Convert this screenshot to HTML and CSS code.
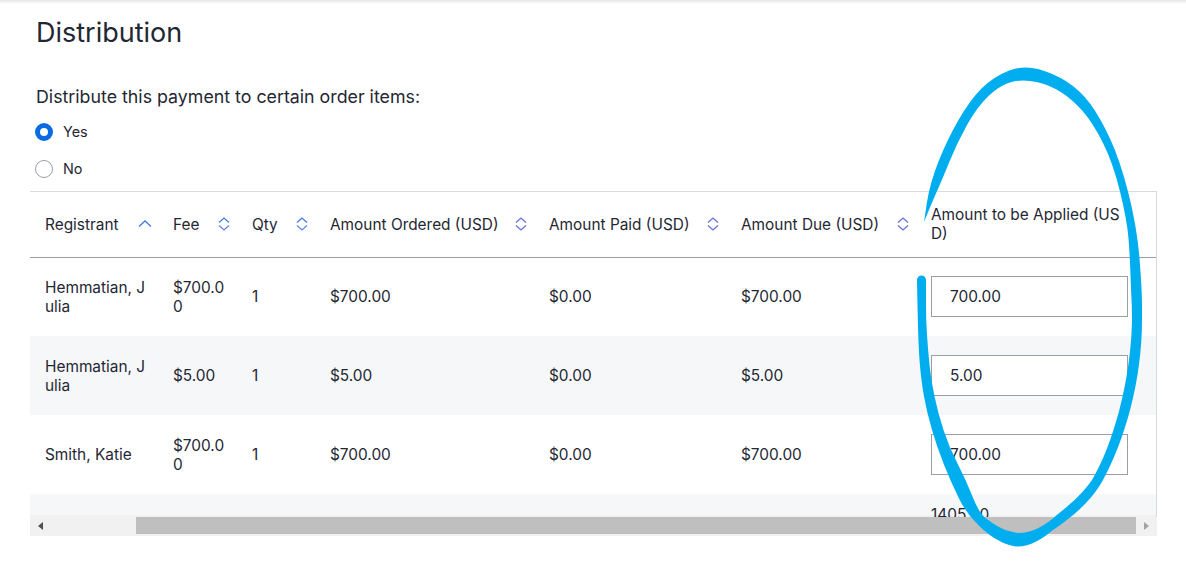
FILE: index.html
```html
<!DOCTYPE html>
<html lang="en">
<head>
<meta charset="utf-8">
<title>Distribution</title>
<link rel="stylesheet" href="styles.css">
</head>
<body>
<div class="topshadow"></div>
<main class="page">
  <h2 class="title">Distribution</h2>
  <p class="question">Distribute this payment to certain order items:</p>
  <label class="radio"><input type="radio" name="dist" checked><span>Yes</span></label>
  <label class="radio"><input type="radio" name="dist"><span>No</span></label>
  <div class="tablewrap">
    <div class="clip">
      <table class="grid">
        <colgroup>
          <col class="c1"><col class="c2"><col class="c3"><col class="c4"><col class="c5"><col class="c6"><col class="c7">
        </colgroup>
        <thead>
          <tr>
            <th><div class="head"><span class="hl">Registrant</span><svg class="sort" viewBox="0 0 14 14"><path class="up" d="M1 9.5 7 4l6 5.5"/></svg></div></th>
            <th><div class="head"><span class="hl">Fee</span><svg class="sort" viewBox="0 0 14 14"><path class="up" d="M2 5.5 7 1l5 4.5"/><path class="down" d="M2 8.5 7 13l5-4.5"/></svg></div></th>
            <th><div class="head"><span class="hl">Qty</span><svg class="sort" viewBox="0 0 14 14"><path class="up" d="M2 5.5 7 1l5 4.5"/><path class="down" d="M2 8.5 7 13l5-4.5"/></svg></div></th>
            <th><div class="head"><span class="hl">Amount Ordered (USD)</span><svg class="sort" viewBox="0 0 14 14"><path class="up alt" d="M2 5.5 7 1l5 4.5"/><path class="down alt" d="M2 8.5 7 13l5-4.5"/></svg></div></th>
            <th><div class="head"><span class="hl">Amount Paid (USD)</span><svg class="sort" viewBox="0 0 14 14"><path class="up alt" d="M2 5.5 7 1l5 4.5"/><path class="down alt" d="M2 8.5 7 13l5-4.5"/></svg></div></th>
            <th><div class="head"><span class="hl">Amount Due (USD)</span><svg class="sort" viewBox="0 0 14 14"><path class="up alt" d="M2 5.5 7 1l5 4.5"/><path class="down alt" d="M2 8.5 7 13l5-4.5"/></svg></div></th>
            <th><span class="hl wrap wide">Amount to be Applied (USD)</span></th>
          </tr>
        </thead>
        <tbody>
          <tr>
            <td><span class="wrap">Hemmatian, Julia</span></td><td><span class="wrap">$700.00</span></td><td>1</td><td>$700.00</td><td>$0.00</td><td>$700.00</td>
            <td><input class="amount" type="text" value="700.00"></td>
          </tr>
          <tr class="alt-row">
            <td><span class="wrap">Hemmatian, Julia</span></td><td>$5.00</td><td>1</td><td>$5.00</td><td>$0.00</td><td>$5.00</td>
            <td><input class="amount" type="text" value="5.00"></td>
          </tr>
          <tr>
            <td>Smith, Katie</td><td><span class="wrap">$700.00</span></td><td>1</td><td>$700.00</td><td>$0.00</td><td>$700.00</td>
            <td><input class="amount" type="text" value="700.00"></td>
          </tr>
          <tr class="total">
            <td></td><td></td><td></td><td></td><td></td><td></td><td>1405.00</td>
          </tr>
        </tbody>
      </table>
    </div>
    <div class="scrollbar">
      <span class="arrow left"></span>
      <div class="track"><div class="thumb"></div></div>
      <span class="arrow right"></span>
    </div>
  </div>
</main>
<svg class="scribble" viewBox="0 0 1186 563" width="1186" height="563" aria-hidden="true">
  <path d="M924 222L927 202Q930 183 938.5 161.5Q947 140 958.5 120Q970 100 981.5 88.5Q993 77 1008 71Q1023 65 1038 69Q1053 73 1066.5 81.5Q1080 90 1090 103.5Q1100 117 1110 138.5Q1120 160 1128.5 193.5Q1137 227 1139.5 258.5Q1142 290 1142 305L1142 320C1142 380 1125 440 1103 480C1090 503 1072 517 1053 530C1042 539 1030 546.5 1018 546.5C1008 546.5 996 540 986 532Q981 528 976 522.5Q966 513 958 496.5Q950 480 943.5 463.5Q937 447 932 430Q927 413 924 396.5Q921 380 919.5 360Q918 340 917 280A4.5 4.5 0 0 1 926 280L926 305Q926 320 927 335Q928 350 929.5 365Q931 380 934.5 396.5Q938 413 943.5 430Q949 447 957.5 463.5Q966 480 972.5 496.5Q979 513 985.5 518Q992 523 998 526.5Q1004 530 1011 531.5Q1018 533 1018 533C1032 533 1045 526 1058 514C1072 503 1082 494 1092 480C1113 445 1131 380 1132 320Q1132 305 1131 288.5Q1130 257 1128.5 238.5Q1127 220 1120 191.5Q1113 163 1103 143Q1093 123 1083 111.5Q1073 100 1061.5 92.5Q1050 85 1036.5 82Q1023 79 1011.5 82Q1000 85 988.5 96Q977 107 967 125Q957 143 949.5 161.5Q942 180 937.5 190Q933 200 924 222Z"/>
</svg>
</body>
</html>
```

FILE: styles.css
```css
* { box-sizing: border-box; }
html, body { margin: 0; height: 563px; overflow: hidden; background: #fff; }
body { position: relative; font-family: Inter, Roboto, "Liberation Sans", sans-serif; color: #1f2733; }
.topshadow { height: 4px; background: linear-gradient(#e6e6e6, #fff); }
.page { padding: 0 29px 0 30px; }
.title { margin: 0 0 0 6px; padding-top: 12px; font-size: 27px; line-height: 34px; font-weight: 400; }
.question { margin: 34px 0 0 6px; font-size: 17.8px; line-height: 26px; }
.radio { display: flex; align-items: center; gap: 10px; margin: 0 0 0 5px; height: 37px; font-size: 14.4px; }
.question + .radio { margin-top: 3px; }
.radio input { appearance: none; width: 18px; height: 18px; margin: 0; border-radius: 50%; border: 1px solid #9a9ea6; background: #fff; }
.radio input:checked { border: 5px solid #0a6ce4; }
.tablewrap { margin-top: 4px; width: 1127px; }
.clip { height: 326px; overflow: hidden; border-top: 1px solid #d8dadd; border-right: 1px solid #d8dadd; }
.grid { width: 1127px; border-collapse: collapse; table-layout: fixed; font-size: 15.4px; }
.c1 { width: 128px; } .c2 { width: 79px; } .c3 { width: 78px; } .c4 { width: 219px; }
.c5 { width: 192px; } .c6 { width: 190px; } .c7 { width: 241px; }
thead tr { height: 65px; border-bottom: 1px solid #9a9ea6; }
th { padding: 0 0 0 15px; font-weight: 400; text-align: left; }
td { padding: 0 0 0 15px; height: 79px; line-height: 19px; }
.head { display: flex; align-items: center; justify-content: space-between; padding-right: 6px; }
.hl { line-height: 19px; }
.wrap { display: block; word-break: break-all; padding-right: 10px; }
.wrap.wide { width: 197px; padding-right: 0; }
.sort { width: 14px; height: 14px; flex: none; fill: none; stroke-width: 1.3; }
.up { stroke: #3f7be6; }
.down { stroke: #5f86ee; }
.alt { stroke: #6a6fe0; }
.alt-row td { background: #f6f7f9; }
.amount { display: block; width: 197px; height: 41px; padding: 0 18px; border: 1px solid #9a9ea6; border-radius: 0; background: #fff; font: inherit; font-size: 15.4px; color: inherit; outline: none; }
.total td { vertical-align: top; padding-top: 11px; background: linear-gradient(#f6f7f9 21px, #f1f1f1 21px); }
.scrollbar { display: flex; align-items: center; height: 19px; padding-bottom: 2px; background: #f1f1f1; }
.arrow { width: 0; height: 0; border-style: solid; border-color: transparent; flex: none; }
.arrow.left { margin-left: 8px; border-width: 4.5px 5px 4.5px 0; border-right-color: #505050; }
.arrow.right { margin-right: 8px; border-width: 4.5px 0 4.5px 5px; border-left-color: #a3a3a3; }
.track { flex: 1; align-self: stretch; margin: 0 8px 0 0; display: flex; }
.thumb { width: 1000px; margin-left: 93px; background: #bfbfbf; }
.scribble { position: absolute; left: 0; top: 0; fill: #00aeef; pointer-events: none; }
```
